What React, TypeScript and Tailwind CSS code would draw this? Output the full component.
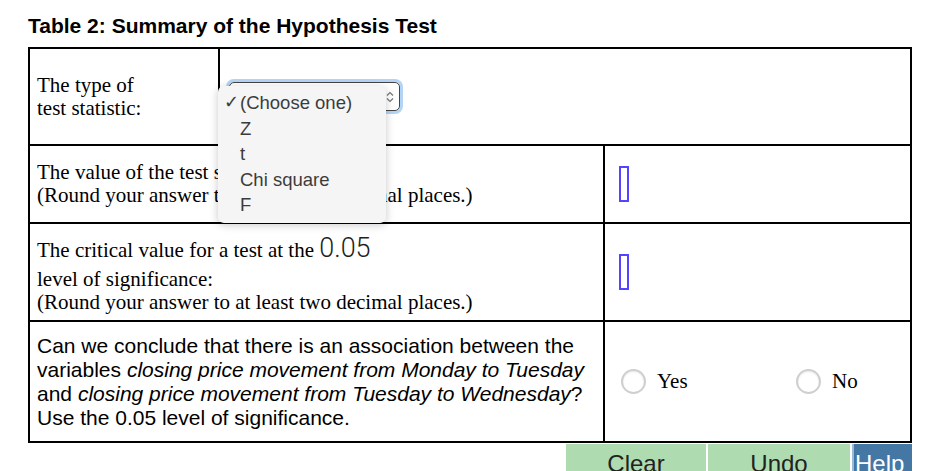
import React from "react";

const serif = "font-['Liberation_Serif',serif] text-[21px] leading-[23px] text-black";
const sans = "font-['Liberation_Sans',Arial,sans-serif]";

// Outlined answer slot used in the numeric rows
function AnswerSlot() {
  return <div className="ml-[14px] h-[36px] w-[10px] border-2 border-[#5544ff]" />;
}

function Radio({ label }: { label: string }) {
  return (
    <label className="flex items-center gap-[11px]">
      <span className="h-[25px] w-[25px] rounded-full border-2 border-[#cfcfcf] bg-white shadow-[inset_0_1px_2px_rgba(0,0,0,0.08)]" />
      <span className={serif}>{label}</span>
    </label>
  );
}

const options = ["(Choose one)", "Z", "t", "Chi square", "F"];

export default function App() {
  return (
    <div className="min-h-screen bg-white pl-[28px]">
      <h2 className={`${sans} pt-[14px] text-[21px] font-bold leading-[24px] text-black`}>
        Table 2: Summary of the Hypothesis Test
      </h2>

      <div className="relative mt-[9px] w-[884px] border-2 border-black">
        {/* Row 1: type of test statistic */}
        <div className="flex h-[95px]">
          <div className={`${serif} flex w-[190px] items-center border-r-2 border-black pl-[7px]`}>
            <div>
              The type of
              <br />
              test statistic:
            </div>
          </div>
          <div className="flex flex-1 items-center pl-[9px]">
            <div className="relative h-[29px] w-[171px] rounded-[5px] border border-[#444] ring-[3px] ring-[#b3d4f5]">
              <svg className="absolute right-[5px] top-[8px]" width="8" height="12" viewBox="0 0 8 12">
                <path d="M1 4.5 L4 1.5 L7 4.5 M1 7.5 L4 10.5 L7 7.5" fill="none" stroke="#777" strokeWidth="1.2" />
              </svg>
            </div>
          </div>
        </div>

        {/* Row 2: value of the test statistic */}
        <div className="flex h-[78px] border-t-2 border-black">
          <div className={`${serif} flex w-[575px] items-center border-r-2 border-black pl-[7px]`}>
            <div className="whitespace-nowrap">
              The value of the test statistic:
              <br />
              (Round your answer to at least two decimal places.)
            </div>
          </div>
          <div className="flex flex-1 items-center">
            <AnswerSlot />
          </div>
        </div>

        {/* Row 3: critical value */}
        <div className="flex h-[98px] border-t-2 border-black">
          <div className={`${serif} flex w-[575px] items-center border-r-2 border-black pl-[7px]`}>
            <div className="whitespace-nowrap">
              <div className="leading-[36px]">
                The critical value for a test at the{" "}
                <span className="font-['Roboto',sans-serif] text-[27px] font-light text-[#1f1f1f]">0.05</span>
              </div>
              level of significance:
              <br />
              (Round your answer to at least two decimal places.)
            </div>
          </div>
          <div className="flex flex-1 items-center">
            <AnswerSlot />
          </div>
        </div>

        {/* Row 4: conclusion */}
        <div className="flex h-[121px] border-t-2 border-black">
          <div className={`${sans} flex w-[575px] items-center border-r-2 border-black pl-[7px] text-[21px] leading-[24px] text-black`}>
            <div className="whitespace-nowrap">
              Can we conclude that there is an association between the
              <br />
              variables <i>closing price movement from Monday to Tuesday</i>
              <br />
              and <i>closing price movement from Tuesday to Wednesday</i>?
              <br />
              Use the 0.05 level of significance.
            </div>
          </div>
          <div className="flex flex-1 items-center pl-[16px]">
            <div className="w-[175px]">
              <Radio label="Yes" />
            </div>
            <Radio label="No" />
          </div>
        </div>

        {/* Open select menu */}
        <div className={`${sans} absolute left-[188px] top-[37px] h-[137px] w-[168px] rounded-[6px] bg-[#f5f5f5] pl-[6px] pt-[4px] text-[18.5px] leading-[25.5px] text-[#3c3c3c] shadow-[0_2px_8px_rgba(0,0,0,0.22)]`}>
          {options.map((o, i) => (
            <div key={o} className="flex">
              <span className="w-[16px] text-[18px]">{i === 0 ? "✓" : ""}</span>
              <span>{o}</span>
            </div>
          ))}
        </div>
      </div>

      {/* Action buttons */}
      <div className={`${sans} ml-[538px] mt-[1px] flex h-[40px] w-[346px] gap-[2px] text-[24px] leading-[40px]`}>
        <button className="w-[140px] bg-[#aedcb0] text-center text-[#222]">Clear</button>
        <button className="w-[142px] bg-[#aedcb0] text-center text-[#222]">Undo</button>
        <button className="flex-1 overflow-hidden border-l-2 border-[#9bbad6] bg-[#4577a4] pl-[1px] text-left text-white">
          Help
        </button>
      </div>
    </div>
  );
}
